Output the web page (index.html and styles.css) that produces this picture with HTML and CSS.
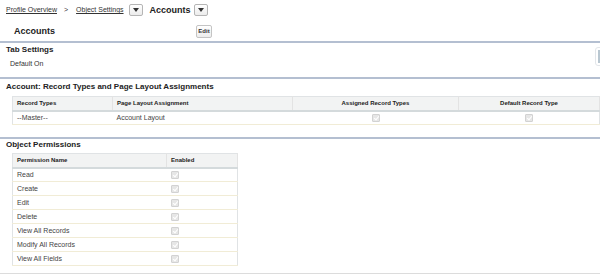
FILE: index.html
```html
<!DOCTYPE html>
<html lang="en">
  <head>
    <meta charset="UTF-8" />
    <title>Accounts</title>
    <link rel="stylesheet" href="styles.css">
  </head>
  <body>
    <div class="crumbs">
      <a href="#">Profile Overview</a>
      <span class="sep">&gt;</span>
      <a href="#">Object Settings</a>
      <button class="drop"><span class="tri"></span></button>
      <span class="current">Accounts</span>
      <button class="drop"><span class="tri"></span></button>
    </div>

    <div class="page-head">
      <h1>Accounts</h1>
      <button class="btn">Edit</button>
    </div>

    <div class="section tabs">
      <h2>Tab Settings</h2>
      <div class="value">Default On</div>
      <div class="side-tab"></div>
    </div>

    <div class="section layouts">
      <h2>Account: Record Types and Page Layout Assignments</h2>
      <table class="list wide">
        <thead>
          <tr>
            <th class="c-rt">Record Types</th>
            <th class="c-pl">Page Layout Assignment</th>
            <th class="c-ar center">Assigned Record Types</th>
            <th class="center">Default Record Type</th>
          </tr>
        </thead>
        <tbody>
          <tr>
            <td>--Master--</td>
            <td>Account Layout</td>
            <td class="center"><span class="chk"></span></td>
            <td class="center"><span class="chk"></span></td>
          </tr>
        </tbody>
      </table>
    </div>

    <div class="section perms">
      <h2>Object Permissions</h2>
      <table class="list narrow">
        <thead>
          <tr>
            <th class="c-pn">Permission Name</th>
            <th>Enabled</th>
          </tr>
        </thead>
        <tbody>
          <tr><td>Read</td><td><span class="chk"></span></td></tr>
          <tr><td>Create</td><td><span class="chk"></span></td></tr>
          <tr><td>Edit</td><td><span class="chk"></span></td></tr>
          <tr><td>Delete</td><td><span class="chk"></span></td></tr>
          <tr><td>View All Records</td><td><span class="chk"></span></td></tr>
          <tr><td>Modify All Records</td><td><span class="chk"></span></td></tr>
          <tr><td>View All Fields</td><td><span class="chk"></span></td></tr>
        </tbody>
      </table>
    </div>
  </body>
</html>
```
FILE: styles.css
```css
* {
  margin: 0;
  padding: 0;
  box-sizing: border-box;
}

body {
  width: 600px;
  font-family: "Liberation Sans", Arial, sans-serif;
  font-size: 7px;
  color: #333;
  background: #fff;
  overflow: hidden;
}

.crumbs {
  display: flex;
  align-items: center;
  height: 18px;
  padding: 1px 0 0 6px;
}

.crumbs a {
  color: #333;
  font-size: 7px;
}

.crumbs .sep {
  margin: 0 8px 0 7px;
  font-size: 7px;
}

.drop {
  display: flex;
  align-items: center;
  justify-content: center;
  width: 14px;
  height: 12px;
  margin: 0 6px 0 5px;
  border: 1px solid #b5b5b5;
  border-radius: 2px;
  background: linear-gradient(#fff, #ececec);
}

.drop .tri {
  width: 0;
  height: 0;
  border-left: 3px solid transparent;
  border-right: 3px solid transparent;
  border-top: 4px solid #333;
}

.crumbs .current {
  font-size: 9px;
  font-weight: bold;
  color: #222;
  margin-left: 1px;
}

.crumbs .current + .drop {
  margin-left: 3px;
}

.page-head {
  display: flex;
  align-items: center;
  height: 25px;
  padding: 3px 0 0 14px;
  border-bottom: 2px solid #b4bfd1;
}

.page-head h1 {
  width: 182px;
  font-size: 9px;
  font-weight: bold;
  color: #222;
}

.btn {
  width: 16px;
  height: 13px;
  font-family: "Liberation Sans", Arial, sans-serif;
  font-size: 6px;
  font-weight: bold;
  color: #333;
  border: 1px solid #c4c4c4;
  border-radius: 2px;
  background: linear-gradient(#fff, #ededed);
}

.section {
  position: relative;
  border-bottom: 2px solid #b4bfd1;
}

.section h2 {
  padding-left: 6px;
  font-size: 8px;
  font-weight: bold;
  color: #222;
  line-height: 11px;
}

.section .value {
  padding: 5px 0 0 10px;
  font-size: 7px;
}

.tabs {
  padding: 1px 0 10px;
}

.layouts {
  padding: 2px 0 12px;
}

.perms {
  padding: 0 0 7px;
  border-bottom: 1px solid #dcdcdc;
}

.side-tab {
  position: absolute;
  right: -3px;
  top: 4px;
  width: 8px;
  height: 19px;
  border: 1px solid #e3e6ea;
  border-radius: 3px;
  background: #fff;
}

.side-tab::after {
  content: "";
  position: absolute;
  left: 2px;
  top: 2px;
  width: 4px;
  height: 13px;
  background: #b9c7d1;
}

.list {
  border-collapse: collapse;
  margin: 3px 0 0 12px;
  border: 1px solid #e0e3e5;
}

.list.wide {
  width: 588px;
  margin-top: 4px;
}

.list.narrow {
  width: 226px;
}

.list th {
  height: 14px;
  padding: 0 4px;
  text-align: left;
  font-size: 6px;
  font-weight: bold;
  color: #222;
  background: #f2f3f3;
  border-bottom: 2px solid #d4dadc;
  border-right: 1px solid #e3e3e3;
}

.list td {
  height: 14px;
  padding: 0 4px;
  font-size: 7px;
  color: #444;
  border-bottom: 1px solid #f1ecd6;
}

.list .center {
  text-align: center;
}

.c-rt { width: 100px; }
.c-pl { width: 180px; }
.c-ar { width: 166px; }
.c-pn { width: 154px; }

.chk {
  display: inline-block;
  vertical-align: middle;
  position: relative;
  width: 8px;
  height: 8px;
  border: 1px solid #d2d2d2;
  border-radius: 1px;
  background: #e6e6e6;
}

.chk::after {
  content: "";
  position: absolute;
  left: 2px;
  top: 0;
  width: 2px;
  height: 4px;
  border-right: 1px solid #fff;
  border-bottom: 1px solid #fff;
  transform: rotate(40deg);
}
```
